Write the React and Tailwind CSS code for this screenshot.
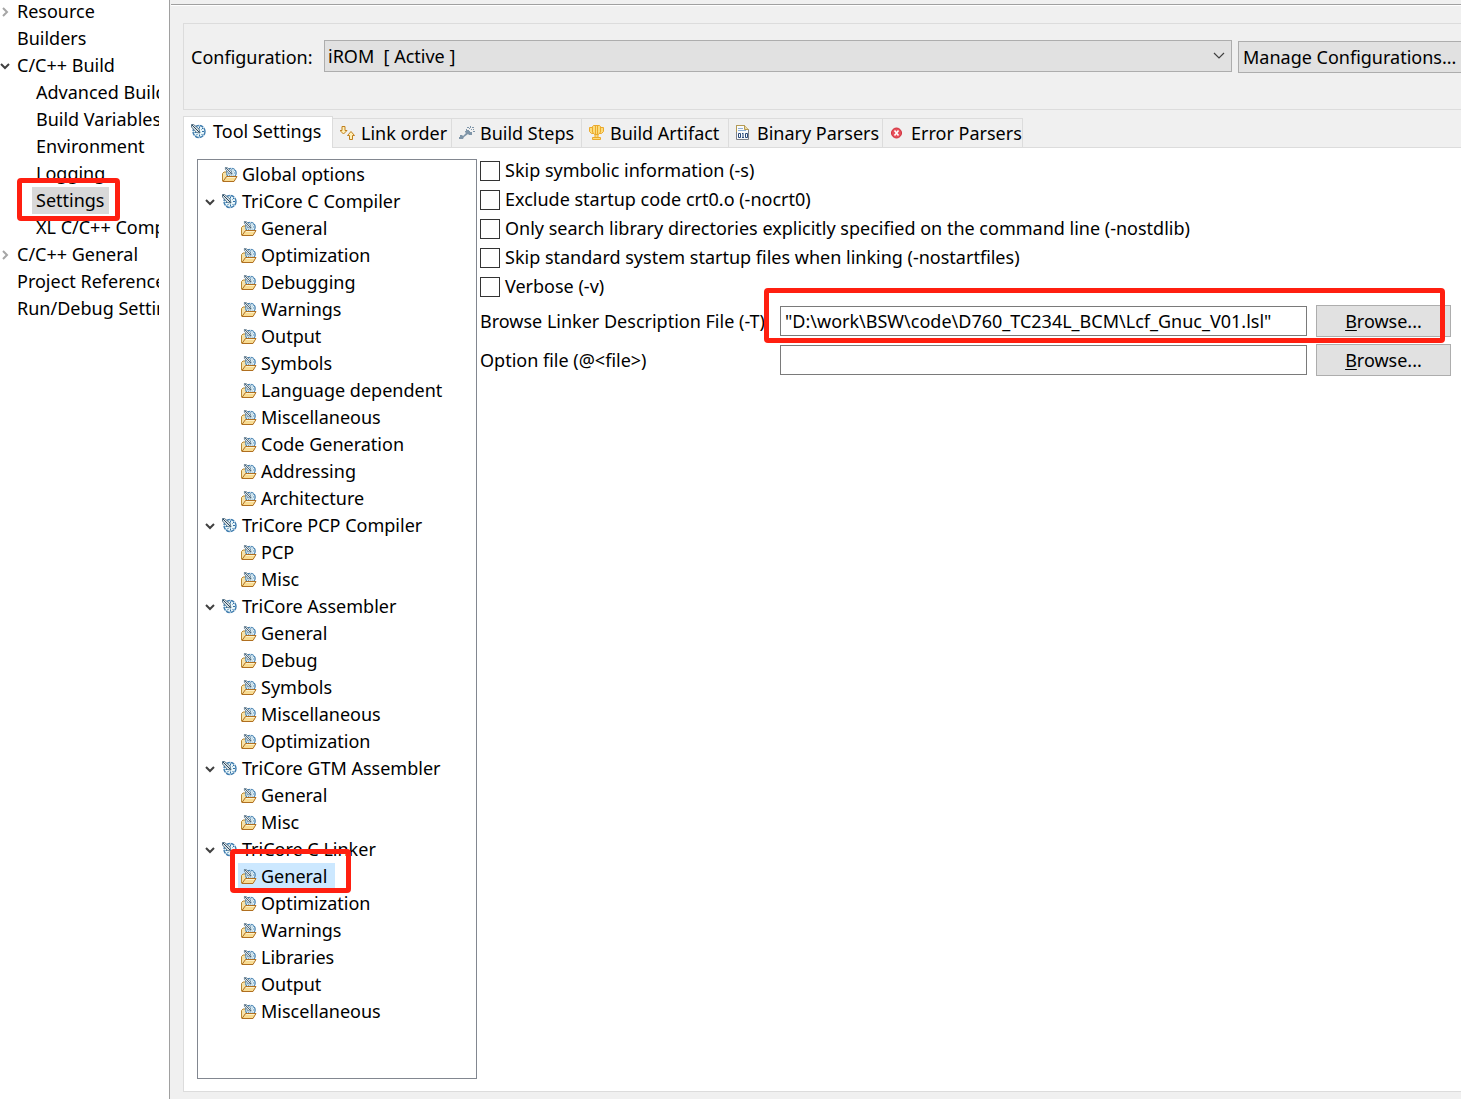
import { useState } from 'react'

const NAV = [
  { label: 'Resource', arrow: 'closed' },
  { label: 'Builders' },
  { label: 'C/C++ Build', arrow: 'open' },
  { label: 'Advanced Build', child: true },
  { label: 'Build Variables', child: true },
  { label: 'Environment', child: true },
  { label: 'Logging', child: true },
  { label: 'Settings', child: true, selected: true },
  { label: 'XL C/C++ Compiler', child: true },
  { label: 'C/C++ General', arrow: 'closed' },
  { label: 'Project References' },
  { label: 'Run/Debug Settings' },
]

const TOOLS = [
  {
    name: 'TriCore C Compiler',
    pages: [
      'General', 'Optimization', 'Debugging', 'Warnings', 'Output', 'Symbols',
      'Language dependent', 'Miscellaneous', 'Code Generation', 'Addressing', 'Architecture',
    ],
  },
  { name: 'TriCore PCP Compiler', pages: ['PCP', 'Misc'] },
  { name: 'TriCore Assembler', pages: ['General', 'Debug', 'Symbols', 'Miscellaneous', 'Optimization'] },
  { name: 'TriCore GTM Assembler', pages: ['General', 'Misc'] },
  {
    name: 'TriCore C Linker',
    pages: ['General', 'Optimization', 'Warnings', 'Libraries', 'Output', 'Miscellaneous'],
  },
]

const FLAGS = [
  'Skip symbolic information (-s)',
  'Exclude startup code crt0.o (-nocrt0)',
  'Only search library directories explicitly specified on the command line (-nostdlib)',
  'Skip standard system startup files when linking (-nostartfiles)',
  'Verbose (-v)',
]

const TABS = [
  { label: 'Link order', icon: LinkIcon, width: 'w-[119px]' },
  { label: 'Build Steps', icon: StepsIcon, width: 'w-[130px]' },
  { label: 'Build Artifact', icon: TrophyIcon, width: 'w-[147px]' },
  { label: 'Binary Parsers', icon: BinaryIcon, width: 'w-[154px]' },
  { label: 'Error Parsers', icon: ErrorIcon, width: 'w-[140px]' },
]

function Arrow({ open }) {
  return (
    <svg viewBox="0 0 10 10" className="h-[10px] w-[10px] shrink-0" fill="none" strokeWidth="2">
      {open
        ? <path d="M1 3l4 4 4-4" stroke="#404040" />
        : <path d="M3 1l4 4-4 4" stroke="#a6a6a6" />}
    </svg>
  )
}

function Dial() {
  return (
    <>
      <circle cx="8" cy="7.5" r="6" fill="#eaf7fa" stroke="#3f7cae" strokeWidth="1.4" strokeDasharray="3.9 0.8" />
      <path d="M8.5 2.5v2M8.500 10.500v2M3.500 8.500h2M11 7.500h2M12 4l-1.500 1.500M5 11.500l1.500-1.500M12 11.500l-1.500-1.500" stroke="#2f6ea5" />
      <path d="M0.500 0.500h2l5.500 4.500 1 4-3.500-0.500-5-5.500z" fill="#dde6ea" stroke="#4b6a80" strokeWidth="0.900" />
      <path d="M1 1l7.500 7.500" stroke="#2b4459" />
    </>
  )
}

function DialIcon() {
  return (
    <svg viewBox="0 0 16 16" className="h-4 w-4 shrink-0" fill="none">
      <Dial />
    </svg>
  )
}

function FolderIcon() {
  return (
    <svg viewBox="0 0 16 16" className="h-4 w-4 shrink-0" fill="none">
      <path d="M0.500 14V6.500l1.500-1.500h3l1 1.500h6v7.500z" fill="#f7e3ab" stroke="#b8862f" />
      <g transform="translate(3 0) scale(0.8)">
        <Dial />
      </g>
      <path d="M1 14.500l3.500-5h10.500l-3 5z" fill="#f8dc93" stroke="#b06f20" strokeLinejoin="round" />
      <path d="M5 10.500h8.500" stroke="#fdf1cb" />
    </svg>
  )
}

function LinkIcon() {
  return (
    <svg viewBox="0 0 16 16" className="h-4 w-4 shrink-0" fill="#fff0b8" stroke="#c07f1c">
      <path d="M2 1.500h3v4h2L3.500 9 0 5.500h2z" />
      <path d="M9.500 14.500h3v-4h2L11 6.500 7.500 10.500h2z" />
    </svg>
  )
}

function StepsIcon() {
  return (
    <svg viewBox="0 0 16 16" className="h-4 w-4 shrink-0" fill="#7f95a8">
      <path d="M0 12h1v-2h2l1 1 3-3-1-1V6h1V4h1v1h2v1h1v1h2v3h-3l-1-1-4 3-1 2H0z" />
      <path d="M8 2h2v1H8zM11 1h1v2h-1zM13 2h2v1h-2zM14 4h1v1h-1zM12 4h1v1h-1zM14 6h2v1h-2zM10 3h1v1h-1z" />
    </svg>
  )
}

function TrophyIcon() {
  return (
    <svg viewBox="0 0 16 16" className="h-4 w-4 shrink-0" fill="#fbdc7c" stroke="#eba92c">
      <path d="M3 2.500H0.500v4l2 2H5M12 2.500h2.500v4l-2 2H10" />
      <path d="M3.500 1.500l1-1h6l1 1V7l-2 2.500h-4L3.500 7z" />
      <path d="M6 9.500h3v3H6zM3.500 12.500h8v2h-8z" />
      <path d="M6.500 1v8M8.500 1v8" />
    </svg>
  )
}

function BinaryIcon() {
  return (
    <svg viewBox="0 0 16 16" className="h-4 w-4 shrink-0" fill="none">
      <path d="M0.500 14.500v-14h8l4 4v10z" fill="#f8fafc" stroke="#7d7f86" />
      <path d="M0.500 7V0.500h8l4 4" stroke="#b59a52" />
      <path d="M8.500 0.500v4h4" fill="#ead9a4" stroke="#b59a52" />
      <path d="M2 3.500h5M2 5.500h8" stroke="#8fb0d6" />
      <path d="M2.500 8.500h2v4h-2zM9.500 8.500h2v4h-2zM7 8v5M6 8.500h1M6 12.500h2" stroke="#2b4a7a" />
    </svg>
  )
}

function ErrorIcon() {
  return (
    <svg viewBox="0 0 16 16" className="h-4 w-4 shrink-0" fill="none">
      <circle cx="6.500" cy="8" r="5" fill="#e8505b" stroke="#d02f3c" />
      <path d="M4.500 5.500l4 5M8.500 5.500l-4 5" stroke="#fff" strokeWidth="1.600" />
    </svg>
  )
}

// Red frame drawn over the spot to look at
function Mark({ className }) {
  return <span className={`pointer-events-none absolute z-10 rounded-[4px] border-5 border-[#ff1f10] ${className}`} />
}

function Sidebar() {
  return (
    <nav className="w-[170px] shrink-0 border-r border-[#a0a0a0] bg-white pr-[10px]">
      <ul className="-mt-0.5 overflow-x-clip">
        {NAV.map(item => (
          <li key={item.label} className={`flex h-[27px] items-center whitespace-nowrap ${item.child ? 'pl-8' : ''}`}>
            {!item.child && (
              <span className="w-[13px] shrink-0">{item.arrow && <Arrow open={item.arrow === 'open'} />}</span>
            )}
            <button className={`relative h-[27px] px-1 leading-[27px] ${item.selected ? 'bg-[#d9d9d9]' : ''}`}>
              {item.label}
              {item.selected && <Mark className="-top-[9px] -right-[11px] -bottom-[7px] -left-[15px]" />}
            </button>
          </li>
        ))}
      </ul>
    </nav>
  )
}

function ToolTree() {
  return (
    <ul className="mt-[3px] w-[280px] shrink-0 border border-[#828790] pt-px whitespace-nowrap">
      <li className="flex h-[27px] items-center pl-[21px]">
        <button className="flex h-[27px] items-center gap-1 px-[3px]"><FolderIcon />Global options</button>
      </li>
      {TOOLS.map(tool => (
        <li key={tool.name}>
          <div className="flex h-[27px] items-center pl-[7px]">
            <Arrow open />
            <button className="ml-1 flex h-[27px] items-center gap-1 px-[3px]"><DialIcon />{tool.name}</button>
          </div>
          <ul>
            {tool.pages.map(page => {
              const selected = tool.name === 'TriCore C Linker' && page === 'General'
              return (
                <li key={page} className="flex h-[27px] items-center pl-10">
                  <button className={`relative flex h-[27px] items-center gap-1 pr-2 pl-[3px] ${selected ? 'bg-[#cce8ff]' : ''}`}>
                    <FolderIcon />{page}
                    {selected && <Mark className="-top-[14px] -right-[16px] -bottom-[3px] -left-[8px]" />}
                  </button>
                </li>
              )
            })}
          </ul>
        </li>
      ))}
    </ul>
  )
}

function FileField({ id, label, value, marked }) {
  return (
    <div className="relative flex h-8 items-center">
      <label htmlFor={id} className="w-[300px] shrink-0 whitespace-nowrap">{label}</label>
      <input id={id} defaultValue={value} className="h-[30px] min-w-0 flex-1 border border-[#7a7a7a] bg-white px-1 outline-none" />
      <button className="ml-[9px] h-8 w-[135px] shrink-0 border border-[#adadad] bg-[#e1e1e1]">
        <span className="underline underline-offset-2">B</span>rowse...
      </button>
      {marked && <Mark className="-top-[17px] right-[6px] -bottom-[6px] left-[284px]" />}
    </div>
  )
}

function LinkerOptions() {
  const [checked, setChecked] = useState({})

  return (
    <div className="min-w-0 flex-1 pr-[10px]">
      {FLAGS.map(flag => (
        <label key={flag} className="flex h-[29px] items-center gap-[5px] whitespace-nowrap">
          <input
            type="checkbox"
            checked={!!checked[flag]}
            onChange={e => setChecked(prev => ({ ...prev, [flag]: e.target.checked }))}
            className="h-5 w-5 shrink-0 appearance-none border border-[#333333] bg-white checked:bg-[#333333]"
          />
          {flag}
        </label>
      ))}
      <div className="mt-1 flex flex-col gap-[7px]">
        <FileField
          id="lcf"
          label="Browse Linker Description File (-T)"
          value={'"D:\\work\\BSW\\code\\D760_TC234L_BCM\\Lcf_Gnuc_V01.lsl"'}
          marked
        />
        <FileField id="optfile" label="Option file (@<file>)" value="" />
      </div>
    </div>
  )
}

export default function App() {
  return (
    <div className="flex min-h-screen overflow-hidden bg-[#f0f0f0] font-['Noto_Sans',sans-serif] text-[18px] leading-[27px] text-black">
      <Sidebar />
      <main className="ml-px flex min-w-0 flex-1 flex-col pt-1 pb-[7px]">
        <div className="h-[2px] border-t border-b border-t-[#a0a0a0] border-b-white" />

        {/* Configuration bar */}
        <div className="mt-[17px] ml-3 flex h-[87px] items-start border border-r-0 border-[#dcdcdc] pt-4 pl-[7px]">
          <label htmlFor="config" className="w-[133px] shrink-0 pt-1">Configuration:</label>
          <div className="relative min-w-0 flex-1">
            <select id="config" className="block h-8 w-full appearance-none border border-[#adadad] bg-[#e1e1e1] pl-[3px] outline-none">
              <option>{'iROM\u00a0\u00a0[ Active ]'}</option>
            </select>
            <svg viewBox="0 0 12 8" className="pointer-events-none absolute top-3 right-[7px] h-2 w-3" fill="none">
              <path d="M1 1l5 5 5-5" stroke="#404040" strokeWidth="1.200" />
            </svg>
          </div>
          <button className="mt-px ml-[6px] h-8 w-[223px] shrink-0 border border-r-0 border-[#adadad] bg-[#e1e1e1] pl-1 text-left whitespace-nowrap">
            Manage Configurations...
          </button>
        </div>

        {/* Tabs */}
        <div className="mt-[6px] ml-3 flex items-end whitespace-nowrap">
          <button className="flex h-8 w-[150px] items-center gap-[6px] border border-b-0 border-[#dcdcdc] bg-white pb-[2px] pl-[7px]">
            <DialIcon />Tool Settings
          </button>
          {TABS.map(({ label, icon: Icon, width }) => (
            <button key={label} className={`flex h-[30px] items-center gap-[5px] border-t border-r border-b border-[#dcdcdc] pl-[7px] ${width}`}>
              <Icon />{label}
            </button>
          ))}
          <div className="flex-1 border-b border-[#dcdcdc]" />
        </div>

        <div className="ml-3 flex flex-1 gap-[3px] border-b border-l border-[#dcdcdc] bg-white pt-2 pb-3 pl-[13px]">
          <ToolTree />
          <LinkerOptions />
        </div>
      </main>
    </div>
  )
}
